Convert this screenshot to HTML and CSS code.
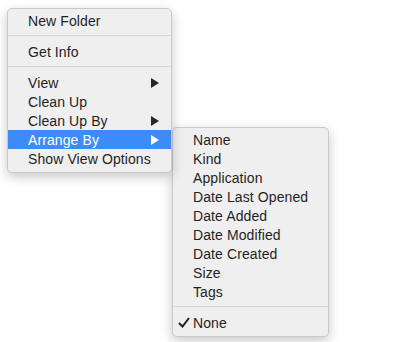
FILE: index.html
```html
<!DOCTYPE html>
<html lang="en">
<head>
  <meta charset="UTF-8">
  <title>Finder Context Menu</title>
  <link rel="stylesheet" href="styles.css">
</head>
<body>

  <div class="desk">
    <div class="menu main">
      <div class="item"><span class="mark"></span>New Folder</div>
      <div class="sep"></div>
      <div class="item"><span class="mark"></span>Get Info</div>
      <div class="sep"></div>
      <div class="item"><span class="mark"></span>View
        <svg class="arrow" width="8" height="10" viewBox="0 0 8 10"><polygon points="0,0 8,5 0,10"/></svg>
      </div>
      <div class="item"><span class="mark"></span>Clean Up</div>
      <div class="item"><span class="mark"></span>Clean Up By
        <svg class="arrow" width="8" height="10" viewBox="0 0 8 10"><polygon points="0,0 8,5 0,10"/></svg>
      </div>
      <div class="item active"><span class="mark"></span>Arrange By
        <svg class="arrow" width="8" height="10" viewBox="0 0 8 10"><polygon points="0,0 8,5 0,10"/></svg>
      </div>
      <div class="item"><span class="mark"></span>Show View Options</div>
    </div>

    <div class="menu sub">
      <div class="item"><span class="mark"></span>Name</div>
      <div class="item"><span class="mark"></span>Kind</div>
      <div class="item"><span class="mark"></span>Application</div>
      <div class="item"><span class="mark"></span>Date Last Opened</div>
      <div class="item"><span class="mark"></span>Date Added</div>
      <div class="item"><span class="mark"></span>Date Modified</div>
      <div class="item"><span class="mark"></span>Date Created</div>
      <div class="item"><span class="mark"></span>Size</div>
      <div class="item"><span class="mark"></span>Tags</div>
      <div class="sep"></div>
      <div class="item">
        <span class="mark">
          <svg class="check" width="12" height="11" viewBox="0 0 12 11"><polyline points="1,6 4.5,9.5 11,1"/></svg>
        </span>None
      </div>
    </div>
  </div>

</body>
</html>
```

FILE: styles.css
```css
body {
  margin: 0;
  background: #fff;
  font-family: "Liberation Sans", Arial, sans-serif;
  font-size: 14px;
  color: #1f1f1f;
}

.desk {
  display: flex;
  align-items: flex-start;
  padding: 8px 7px;
}

.menu {
  background: #efefef;
  border: 1px solid #c9c9c9;
  border-radius: 5px;
  box-shadow: 0 4px 12px rgba(0, 0, 0, 0.22);
  padding: 2px 0 4px;
}

.main {
  width: 163px;
  position: relative;
  z-index: 1;
}

.sub {
  width: 155px;
  margin-top: 119px;
}

.item {
  display: flex;
  align-items: center;
  height: 19px;
  padding: 0 12px 0 5px;
  white-space: nowrap;
  letter-spacing: 0.1px;
}

.mark {
  width: 15px;
  flex: none;
  display: flex;
  align-items: center;
}

.check {
  fill: none;
  stroke: #1f1f1f;
  stroke-width: 2;
}

.arrow {
  margin-left: auto;
  fill: #262626;
}

.active {
  background: #3d8bf6;
  color: #fff;
}

.active .arrow {
  fill: #fff;
}

.sep {
  height: 1px;
  background: #d6d6d6;
  margin: 5px 0 6px;
}
```
